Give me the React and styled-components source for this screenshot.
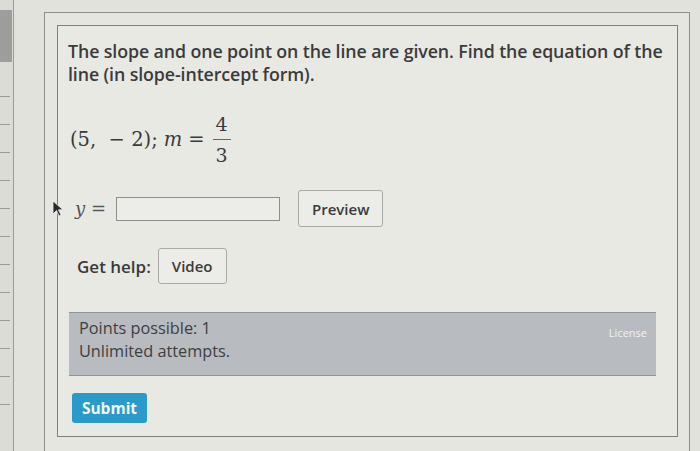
import React from "react";
import styled, { createGlobalStyle } from "styled-components";

const Global = createGlobalStyle`
  html, body { margin: 0; padding: 0; }
  body {
    background: #e2e2dc;
    font-family: "Open Sans", "Liberation Sans", sans-serif;
    color: #3a3a3a;
    width: 700px;
    height: 451px;
    overflow: hidden;
  }
`;

const Page = styled.div`
  display: flex;
  height: 451px;
`;

const Sidebar = styled.div`
  width: 13px;
  flex-shrink: 0;
  border-right: 1px solid #9a9a96;
  display: flex;
  flex-direction: column;
  padding-top: 10px;
  background: #dcdcd6;
`;

const SideBlock = styled.div`
  height: 52px;
  width: 12px;
  background: #9d9d9b;
  margin-bottom: 34px;
`;

const SideTick = styled.div`
  height: 1px;
  width: 10px;
  background: #9a9a96;
  margin-bottom: 27px;
`;

const Outer = styled.div`
  margin: 12px 0 0 30px;
  width: 646px;
  height: 460px;
  border: 1px solid #8d8d8a;
  padding: 12px 11px 0 12px;
  box-sizing: border-box;
  background: #e6e6e0;
`;

const Inner = styled.div`
  border: 1px solid #7f7f7c;
  height: 412px;
  box-sizing: border-box;
  padding: 14px 16px 0 10px;
  background: #e9e9e4;
`;

const Question = styled.p`
  margin: 0;
  font-size: 17.8px;
  line-height: 23px;
  font-weight: 600;
  color: #3b3b3b;
  letter-spacing: -0.1px;
  white-space: nowrap;
`;

const MathRow = styled.div`
  display: flex;
  align-items: center;
  margin-top: 23px;
  margin-left: 2px;
  font-family: "DejaVu Serif", "Liberation Serif", serif;
  font-size: 19.5px;
  color: #3a3a3a;
  gap: 6px;
`;

const Ital = styled.i`
  font-style: italic;
`;

const Frac = styled.span`
  display: inline-flex;
  flex-direction: column;
  align-items: center;
  font-size: 19px;
  line-height: 30px;
  margin-left: 2px;
  span + span {
    border-top: 1px solid #666;
    padding: 0 3px;
  }
`;

const AnswerRow = styled.div`
  display: flex;
  align-items: center;
  margin-top: 20px;
  margin-left: -16px;
`;

const Cursor = styled.svg`
  width: 14px;
  height: 18px;
  margin-right: 9px;
`;

const MathLabel = styled.span`
  font-family: "DejaVu Serif", "Liberation Serif", serif;
  font-size: 18px;
  color: #555;
  margin-right: 10px;
`;

const AnswerInput = styled.div`
  width: 162px;
  height: 22px;
  border: 1px solid #8e8e8a;
  background: #ececE8;
  margin-right: 18px;
`;

const Button = styled.div`
  display: inline-flex;
  align-items: center;
  justify-content: center;
  height: ${(p) => p.$h}px;
  padding: 0 ${(p) => p.$px}px;
  border: 1px solid #a9a9a5;
  border-radius: 3px;
  background: #ececE8;
  font-size: 15px;
  font-weight: 600;
  color: #3a3a3a;
`;

const HelpRow = styled.div`
  display: flex;
  align-items: center;
  margin-top: 21px;
  margin-left: 9px;
  gap: 7px;
  font-size: 17px;
  font-weight: 600;
  color: #3a3a3a;
`;

const InfoBar = styled.div`
  margin: 28px 5px 0 1px;
  height: 64px;
  box-sizing: border-box;
  background: #b8bbbf;
  border-top: 1px solid #8d959c;
  border-bottom: 1px solid #8d959c;
  display: flex;
  justify-content: space-between;
  padding: 4px 9px 0 10px;
`;

const InfoText = styled.div`
  font-size: 16.3px;
  line-height: 23px;
  font-weight: 500;
  color: #3d3f42;
`;

const License = styled.span`
  font-size: 11px;
  color: #f2f4f6;
  margin-top: 8px;
`;

const Submit = styled.div`
  display: inline-flex;
  align-items: center;
  justify-content: center;
  margin: 17px 0 0 4px;
  width: 75px;
  height: 30px;
  border-radius: 3px;
  background: #2a9bc9;
  color: #f3f8fb;
  font-size: 15.5px;
  font-weight: 700;
`;

export default function App() {
  return (
    <>
      <Global />
      <Page>
        <Sidebar>
          <SideBlock />
          <SideTick />
          <SideTick />
          <SideTick />
          <SideTick />
          <SideTick />
          <SideTick />
          <SideTick />
          <SideTick />
          <SideTick />
          <SideTick />
          <SideTick />
          <SideTick />
        </Sidebar>
        <Outer>
          <Inner>
            <Question>
              The slope and one point on the line are given. Find the equation of the
              <br />
              line (in slope-intercept form).
            </Question>
            <MathRow>
              <span>(5,&nbsp; − 2);</span>
              <Ital>m</Ital>
              <span>=</span>
              <Frac>
                <span>4</span>
                <span>3</span>
              </Frac>
            </MathRow>
            <AnswerRow>
              <Cursor viewBox="0 0 14 18">
                <path d="M1 1 L1 14 L4.5 10.5 L7 16 L9 15 L6.5 9.8 L11 9.8 Z" fill="#2a2a2a" stroke="#eee" strokeWidth="0.8" />
              </Cursor>
              <MathLabel>
                <Ital>y</Ital> =
              </MathLabel>
              <AnswerInput />
              <Button $h={35} $px={13}>Preview</Button>
            </AnswerRow>
            <HelpRow>
              <span>Get help:</span>
              <Button $h={34} $px={13}>Video</Button>
            </HelpRow>
            <InfoBar>
              <InfoText>
                Points possible: 1
                <br />
                Unlimited attempts.
              </InfoText>
              <License>License</License>
            </InfoBar>
            <Submit>Submit</Submit>
          </Inner>
        </Outer>
      </Page>
    </>
  );
}
